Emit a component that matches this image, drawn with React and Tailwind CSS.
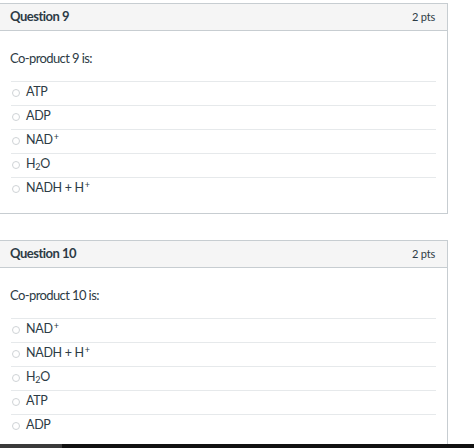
const questions = [
  {
    title: "Question 9",
    prompt: "Co-product 9 is:",
    answers: ["ATP", "ADP", "NAD+", "H2O", "NADH + H+"],
  },
  {
    title: "Question 10",
    prompt: "Co-product 10 is:",
    answers: ["NAD+", "NADH + H+", "H2O", "ATP", "ADP"],
  },
];

function Label({ text }) {
  if (text === "H2O") {
    return (
      <span>
        H<sub className="text-[9px] relative top-[2px]">2</sub>O
      </span>
    );
  }
  if (text.endsWith("+")) {
    return (
      <span>
        {text.slice(0, -1)}
        <sup className="text-[9px] relative top-[-4px] ml-[1px]">+</sup>
      </span>
    );
  }
  return <span>{text}</span>;
}

function Question({ q }) {
  return (
    <div className="w-[449px] ml-[-1px] border border-[#c7cdd1] bg-white">
      <div className="h-[27px] bg-[#f5f5f5] border-b border-[#c7cdd1] flex items-center justify-between pl-[10px] pr-[12px]">
        <span className="text-[13px] font-bold tracking-[-0.5px] text-[#2d3b45]">{q.title}</span>
        <span className="text-[11px] tracking-[-0.2px] text-[#2d3b45]">2 pts</span>
      </div>
      <div className="pt-[18px] pb-[12px] px-[11px]">
        <p className="text-[13px] tracking-[-0.6px] text-[#2d3b45] leading-[18px] mb-[14px] ml-[-1px]">{q.prompt}</p>
        <ul>
          {q.answers.map((a) => (
            <li
              key={a}
              className="h-[24px] pb-[3px] border-t border-[#e6e9eb] flex items-center gap-[6px] text-[12.5px] tracking-[-0.3px] text-[#2d3b45]"
            >
              <span className="w-[8px] h-[8px] rounded-full border border-[#cfd3d6] bg-white ml-[1px] mt-[2px]" />
              <Label text={a} />
            </li>
          ))}
        </ul>
      </div>
    </div>
  );
}

export default function App() {
  return (
    <div
      className="w-[474px] h-[448px] bg-white relative overflow-hidden pt-[3px]"
      style={{ fontFamily: "Lato, 'Open Sans', sans-serif" }}
    >
      <div className="flex flex-col gap-[26px]">
        {questions.map((q) => (
          <Question key={q.title} q={q} />
        ))}
      </div>
      <div className="absolute left-0 right-0 bottom-0 h-[4px] flex">
        <div className="w-[62px] bg-[#3a3a3a]" />
        <div className="flex-1 bg-[#111]" />
      </div>
    </div>
  );
}
